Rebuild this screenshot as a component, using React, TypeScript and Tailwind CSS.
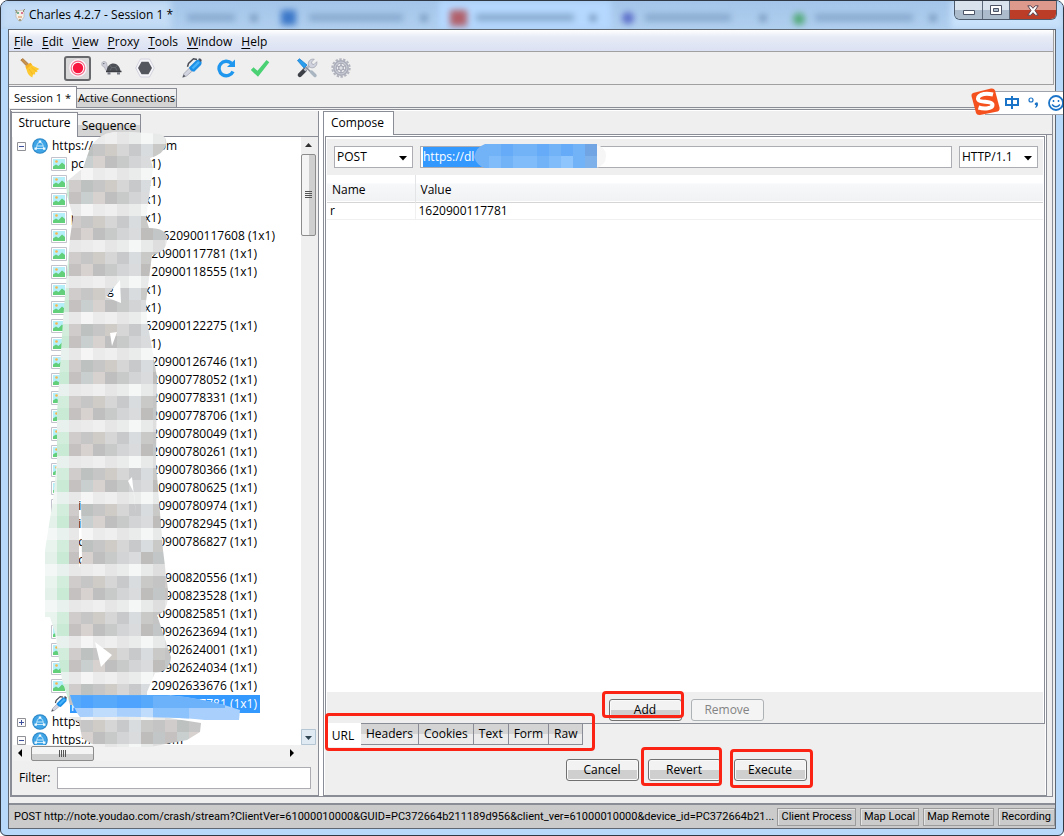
import { type ReactNode } from "react";
import { clsx } from "clsx";

type TreeRow = {
  head?: string;
  tail?: string;
  width?: "short" | "wide";
  selected?: boolean;
};

const requests: TreeRow[] = [
  { head: "pc", tail: "(1x1)", width: "short" },
  { tail: "(1x1)", width: "short" },
  { tail: "(1x1)", width: "short" },
  { head: "p", tail: "(1x1)", width: "short" },
  { tail: "620900117608 (1x1)", width: "wide" },
  { tail: "20900117781 (1x1)" },
  { tail: "20900118555 (1x1)" },
  { head: "pc.gui.g", tail: "(1x1)", width: "short" },
  { tail: "(1x1)", width: "short" },
  { tail: "620900122275 (1x1)" },
  { tail: "(1x1)", width: "short" },
  { tail: "20900126746 (1x1)" },
  { tail: "20900778052 (1x1)" },
  { tail: "20900778331 (1x1)" },
  { tail: "20900778706 (1x1)" },
  { tail: "20900780049 (1x1)" },
  { tail: "20900780261 (1x1)" },
  { tail: "20900780366 (1x1)" },
  { tail: "20900780625 (1x1)" },
  { head: "pi", tail: "20900780974 (1x1)" },
  { head: "pi", tail: "20900782945 (1x1)" },
  { head: "pc", tail: "20900786827 (1x1)" },
  { head: "pc" },
  { tail: "20900820556 (1x1)" },
  { tail: "20900823528 (1x1)" },
  { tail: "20900825851 (1x1)" },
  { tail: "20902623694 (1x1)" },
  { head: "pc.g", tail: "20902624001 (1x1)" },
  { head: "pc.g", tail: "20902624034 (1x1)" },
  { head: "pc.gu", tail: "20902633676 (1x1)" },
  { head: "p", tail: "117781 (1x1)", selected: true },
];

const menus = ["File", "Edit", "View", "Proxy", "Tools", "Window", "Help"];
const bodyTabs = ["Headers", "Cookies", "Text", "Form", "Raw"];
const statusButtons = ["Client Process", "Map Local", "Map Remote", "Recording"];

/* ---------- icons ---------- */

function BroomIcon() {
  return (
    <svg width="20" height="20" viewBox="0 0 20 20" aria-hidden>
      <path d="M.8 2 2.800.6 9.500 7 7.500 9Z" fill="#c8924a" stroke="#a8743a" strokeWidth=".8" />
      <path d="M5.500 8.500 10.500 4.800 12.800 7.800 19.500 11 17 12.300 17.500 14 15 14.200 15.200 16.500 13 16.300 12.300 19.500Q8 17.500 6.800 12.500Z" fill="#fdc92e" />
      <path d="M5.500 8.500 10.500 4.800 11.800 6.600 6.600 11Z" fill="#f7b324" />
      <path d="m9 11 4 5.500M11.500 9.500l4.500 3.500" stroke="#eeb020" strokeWidth=".7" />
    </svg>
  );
}

function RecordIcon() {
  return (
    <svg width="20" height="20" viewBox="0 0 20 20" aria-hidden>
      <circle cx="10" cy="10" r="9.300" fill="#fbf6f8" stroke="#d5ccd4" strokeWidth=".8" />
      <circle cx="10" cy="10" r="6.800" fill="#fff" stroke="#f7708e" strokeWidth="1.200" />
      <circle cx="10" cy="10" r="5.200" fill="#f8183f" />
    </svg>
  );
}

function TurtleIcon() {
  return (
    <svg width="21" height="20" viewBox="0 0 21 20" aria-hidden>
      <path d="M.8 6C.8 3.800 2.200 3.500 3.200 3.500 5.200 3.500 6 5.500 6 7.500L8 12 6.500 13.500C4.500 12.500 4 11 3.500 9 2 8.700.8 8 .8 6Z" fill="#cdced9" stroke="#a5a7b3" strokeWidth=".7" />
      <circle cx="2.800" cy="5.600" r=".7" fill="#55575e" />
      <path d="M5.500 13C6 8 9 5.500 12.500 5.500s6.500 3.500 7 7.500Z" fill="#4d4f56" />
      <path d="M9 7 10.500 9.500h4L16.500 7M10.500 9.500 9 13M14.500 9.500 16 13" stroke="#6f727a" strokeWidth=".7" fill="none" />
      <path d="M5 12.800h15.500v1.500H5Z" fill="#3b3d43" />
      <path d="M6.500 14.300h3v2.200h-3zM16 14.300h3v2.200h-3z" fill="#777a84" />
    </svg>
  );
}

function HexIcon() {
  return (
    <svg width="20" height="20" viewBox="0 0 20 20" aria-hidden>
      <path d="M5.500 1h9L19.300 10l-4.800 9h-9L.7 10Z" fill="#f6f6fa" stroke="#d2d3de" />
      <path d="M6.500 3.800h7L17 10l-3.500 6.200h-7L3 10Z" fill="#55575e" />
    </svg>
  );
}

function PenIcon({ size = 20 }: { size?: number }) {
  return (
    <svg width={size} height={size} viewBox="0 0 20 20" aria-hidden>
      <path d="M.8 19.200 2 15.500 8.500 9 11.500 12 4.500 18Z" fill="#d2d4df" stroke="#9699a6" strokeWidth=".7" />
      <path d="m.5 19.500 1.200-3 1.800 1.800Z" fill="#4f525a" />
      <path d="M7 9.500 14 2.500Q16.500.8 18.500 2.500t.5 4.500L12.200 13.800Q10 13.500 8.600 12.200T7 9.500Z" fill="#1c8fe6" />
      <path d="m10.500 10.500 6.500-6.500" stroke="#48b3fa" strokeWidth="2.400" />
      <path d="M5.500 8.800 6.500 5.500 11.500.8 15 1.500" stroke="#4b4e57" strokeWidth="1.500" fill="none" />
      <path d="m16 1 2-.8 1.800 1.800-.8 2Z" fill="#4b4f5b" />
    </svg>
  );
}

function RepeatIcon() {
  return (
    <svg width="20" height="20" viewBox="0 0 20 20" aria-hidden>
      <path d="M15.500 5.300A7.300 7.300 0 1 0 17 13.500" fill="none" stroke="#1f97ee" strokeWidth="3.400" />
      <path d="M19 1.500V9h-8Z" fill="#1f97ee" />
    </svg>
  );
}

function CheckIcon() {
  return (
    <svg width="20" height="20" viewBox="0 0 20 20" aria-hidden>
      <path d="m.8 12 2.700-2.800 4 3.600L16.500 2 19.300 4.200 8 18.800Z" fill="#4ad174" />
    </svg>
  );
}

function ToolsIcon() {
  return (
    <svg width="22" height="20" viewBox="0 0 22 20" aria-hidden>
      <path d="m3.800 17 5-5" stroke="#3d4047" strokeWidth="4.200" strokeLinecap="round" />
      <path d="m8.500 12.500 6-6" stroke="#b9bdca" strokeWidth="2.600" />
      <path d="M13 8.500C10.800 4 14 .5 18.300 1.200L15.500 4 16 6l2 .5 2.800-2.800C21.500 8 18 10.800 14.500 9.500Z" fill="#d0d3de" stroke="#9da1ae" strokeWidth=".7" />
      <path d="m9 8.500 7.500 7" stroke="#8d919d" strokeWidth="1.600" />
      <path d="m15.500 14 3.500 3.500" stroke="#aab5c2" strokeWidth="3.400" strokeLinecap="round" />
      <path d="M1.500 2.500 3.500.8 11 7 8 10Z" fill="#2a9ded" stroke="#1a7fd0" strokeWidth=".8" />
    </svg>
  );
}

function GearIcon() {
  return (
    <svg width="20" height="20" viewBox="0 0 20 20" aria-hidden>
      <circle cx="10" cy="10" r="8.700" fill="none" stroke="#b1b3be" strokeWidth="2" strokeDasharray="2.400 1.500" />
      <circle cx="10" cy="10" r="7.200" fill="#c7c9d3" stroke="#a9acb8" strokeWidth="1.400" />
      <circle cx="10" cy="10" r="4.800" fill="#ececf0" stroke="#a3a6b2" />
      <path d="M10 5v10M5.500 7.500l9 5M14.500 7.500l-9 5" stroke="#a9acb8" strokeWidth="1.400" />
      <circle cx="10" cy="10" r="2.300" fill="#dfe0e6" stroke="#9b9eaa" />
    </svg>
  );
}

function GlobeIcon() {
  return (
    <svg width="16" height="16" viewBox="0 0 16 16" aria-hidden className="shrink-0">
      <circle cx="8" cy="8" r="7.800" fill="#2b86c6" />
      <circle cx="8" cy="8" r="6.800" fill="#3fa5e6" />
      <path d="M3 10.500h10M8 3.500C5.500 5 4.500 7.500 4.500 10.500M8 3.500c2.500 1.500 3.500 4 3.500 7M5 8h6" stroke="#c4e7fc" fill="none" />
      <path d="M6.800 2.500h2.400v2.200H6.800zM2.500 9.500h2.400v2.200H2.500zM11 9.500h2.400v2.200H11z" fill="#f0faff" />
    </svg>
  );
}

function PictureIcon() {
  return (
    <svg width="16" height="14" viewBox="0 0 16 14" aria-hidden className="shrink-0">
      <path d="M.5.5h15v13H.5z" fill="#fff" stroke="#c3c3cd" />
      <path d="M2 2h12v10H2z" fill="#b4effa" />
      <path d="M2 9.500 5 7.500 7.500 9 11 5.500l3 2.500v4H2z" fill="#62cf7b" />
      <circle cx="5.500" cy="4.500" r="1.300" fill="#f7b64a" />
    </svg>
  );
}

function Expander({ open }: { open?: boolean }) {
  return (
    <button type="button" aria-label={open ? "Collapse" : "Expand"} className="shrink-0">
      <svg width="9" height="9" viewBox="0 0 9 9" aria-hidden>
        <path d="M.5.5h8v8h-8z" fill="#fbfbfb" stroke="#8f9197" />
        <path d={open ? "M2 4.500h5" : "M2 4.500h5M4.500 2v5"} stroke="#3c4e9c" />
      </svg>
    </button>
  );
}

/* ---------- pixelated cover ---------- */

const mosaicTones = [
  ["#f3f7f5", "#e9f1ee", "#e8e8e8", "#f5f5f6", "#ebebec", "#f0efef", "#e6e6e6", "#eaebeb", "#f5f6f6", "#e8e9e9", "#dededf"],
  ["#eaf4ef", "#d2eddc", "#cfcccb", "#bdc1bf", "#c6c6c6", "#cfcbc7", "#d6d6d6", "#c7c9cb", "#d9dcde", "#c9c9c8", "#c4c4c4"],
  ["#e4f1ea", "#c9ebd6", "#c6c1c1", "#c9cecf", "#d7d2cf", "#bfbfbf", "#c8c9c9", "#d2d4d6", "#d9dbdc", "#bebdbb", "#c3c6c7"],
];

const columnShape =
  "M113 132H133L160 134Q168 137 166 145Q164 154 150 158L153 168L146 218L149 228Q167 228 167 239Q167 252 152 255L146 302L147 320L157 377L156 463L163 550L168 590Q169 612 157 615L163 633L171 657Q170 672 155 673L147 692V705H70L62 680L55 633L50 617H45V550L53 500L57 460V413L63 320L67 272L70 238L73 217L67 195L66 182L83 168L90 148Q98 134 113 132Z" +
  "M106 297 120 280 121 303ZM110 333 117 332 112 346ZM128 481 132 477 136 515 134 493ZM79 500 81 500 82 560 79 568ZM95 642 112 655 101 667Z" +
  "M68 717H163L201 723 200 732 187 740 150 747H97L82 738 79 722Z";

function TreeMosaic() {
  const cells: ReactNode[] = [];
  for (let row = 0; row < 52; row++) {
    for (let col = 0; col < 14; col++) {
      // the middle columns drift one step every few rows so that they don't stripe
      const drift = col > 2 && Math.floor(row / 7) % 2 ? 1 : 0;
      const tone = mosaicTones[row % 3][col < 2 ? col : 2 + ((col - 2 + drift) % 9)];
      cells.push(
        <rect key={`${row}-${col}`} x={45 + col * 12} y={132 + row * 12} width="12" height="12" fill={tone} />
      );
    }
  }
  return (
    <svg
      width="260"
      height="640"
      viewBox="12 111 260 640"
      shapeRendering="crispEdges"
      aria-hidden
      className="pointer-events-none absolute left-0 top-0"
    >
      <clipPath id="column">
        <path d={columnShape} clipRule="evenodd" />
      </clipPath>
      <clipPath id="stroke">
        <path d="M70 695H167Q205 698 240 710L239 720H205Q170 716 80 717Q74 710 70 695Z" />
      </clipPath>
      <g clipPath="url(#column)">{cells}</g>
      <g clipPath="url(#stroke)">
        <path d="M60 690H250V722H60z" fill="#a9d0fc" />
        <path d="M60 690H170V708H60z" fill="#57a9fb" />
        <path d="M81 696h12v12H81zM117 696h24v12h-24z" fill="#4da3fd" />
        <path d="M153 696h72v12h-72z" fill="#6cb2fb" />
        <path d="M93 708h24v12H93zM141 708h12v12h-12z" fill="#bfdcfd" />
        <path d="M153 708h36v12h-36z" fill="#8cc3fd" />
      </g>
    </svg>
  );
}

/* ---------- small parts ---------- */

function Highlight({ className }: { className: string }) {
  return (
    <span
      aria-hidden
      className={clsx("pointer-events-none absolute rounded-sm border-3 border-[#fb2313]", className)}
    />
  );
}

function PushButton({ children, disabled }: { children: ReactNode; disabled?: boolean }) {
  return (
    <button
      type="button"
      disabled={disabled}
      className={clsx(
        "h-[22px] w-[73px] rounded-[3px] border text-[12px] leading-5",
        disabled
          ? "border-[#adb2b5] bg-[#f4f4f4] text-[#838383]"
          : "border-[#707070] bg-linear-to-b from-[#f2f2f2] from-50% to-[#cfcfcf] to-50% text-black shadow-[inset_0_0_0_1px_#fafafa]"
      )}
    >
      {children}
    </button>
  );
}

function Combo({ label, value }: { label: string; value: string }) {
  return (
    <div className="relative w-[79px] shrink-0">
      <select
        aria-label={label}
        defaultValue={value}
        className="h-[22px] w-full appearance-none border border-[#abadb3] bg-white px-[2px] text-[12px] leading-5"
      >
        <option>{value}</option>
      </select>
      <svg width="8" height="5" viewBox="0 0 8 5" className="pointer-events-none absolute right-[6px] top-[10px]" aria-hidden>
        <path d="M0 0h8L4 4.500Z" />
      </svg>
    </div>
  );
}

function TitleBar() {
  return (
    <header className="relative flex h-[28px] shrink-0 items-center overflow-hidden bg-linear-to-b from-[#a4c5e9] to-[#b0cfef] pl-[14px]">
      <svg className="absolute inset-0 h-full w-full blur-[3px]" aria-hidden>
        <path d="M438 0H610V30H438z" fill="#b5d8ff" />
        <path d="M0 0h170v30H0z" fill="#c4dcf5" />
        <path d="M950 0h120v30H950z" fill="#c9e2fb" />
        <path d="M186 13h48v7h-48zM308 13h94v7h-94zM475 13h98v7h-98zM644 13h86v7h-86zM814 13h98v7h-98z" fill="#86a8cc" />
        <path d="M250 14h6v6h-6zM420 14h6v6h-6zM589 14h6v6h-6zM759 14h6v6h-6zM929 14h6v6h-6z" fill="#6687ad" />
        <path d="M280 9h15v15h-15z" fill="#3c78c8" />
        <path d="M449 9h17v16h-17z" fill="#b1606a" />
        <circle cx="627" cy="17" r="6" fill="#5a6cc8" />
        <circle cx="798" cy="18" r="6" fill="#4fa874" />
      </svg>
      <svg width="10" height="14" viewBox="0 0 10 14" className="relative shrink-0" aria-hidden>
        <path d="m1 3 8-1v7l-3 4H4L1 9Z" fill="#f3eee8" stroke="#b8b4a8" strokeWidth=".6" />
        <path d="M0 2 2 3 1 5M10 1 8 3l1 1M4 13l1-2 1 2" stroke="#8c8d6e" fill="none" />
        <circle cx="3" cy="5" r="1" fill="#4e9c78" />
        <circle cx="7" cy="5" r="1" fill="#d24b72" />
        <path d="M3 9h4" stroke="#d7894b" />
      </svg>
      <h1 className="relative ml-1 text-[12px] leading-4">Charles 4.2.7 - Session 1 *</h1>
      <div className="absolute right-[6px] top-0 flex h-[19px] overflow-hidden rounded-b-md border border-t-0 border-[#4c5a6c]">
        <button type="button" aria-label="Minimize" className="flex w-7 items-center justify-center border-r border-[#5c6a7c] bg-linear-to-b from-[#d9e3ee] from-50% to-[#adbccd] to-50%">
          <svg width="12" height="6" viewBox="0 0 12 6" className="mt-[5px]" aria-hidden>
            <path d="M.5.5h11v4H.5z" fill="#fff" stroke="#4b5364" />
          </svg>
        </button>
        <button type="button" aria-label="Maximize" className="flex w-[27px] items-center justify-center border-r border-[#5c6a7c] bg-linear-to-b from-[#d9e3ee] from-50% to-[#adbccd] to-50%">
          <svg width="12" height="10" viewBox="0 0 12 10" aria-hidden>
            <path d="M.5.5h11v9H.5z" fill="#fff" stroke="#4b5364" />
            <path d="M3.500 3.500h5v3h-5z" fill="#aebdce" stroke="#4b5364" />
          </svg>
        </button>
        <button type="button" aria-label="Close" className="flex w-[46px] items-center justify-center bg-linear-to-b from-[#dd9a8c] from-50% to-[#bb3d28] to-50%">
          <svg width="12" height="11" viewBox="0 0 12 11" aria-hidden>
            <path d="M.8.8h3L6 3.300 8.200.8h3L8 5.500l3.200 4.700h-3L6 7.700l-2.200 2.500h-3L4 5.500Z" fill="#fff" stroke="#5a4450" />
          </svg>
        </button>
      </div>
    </header>
  );
}

function InputMethodBar() {
  return (
    <div className="absolute right-0 top-[87px] flex h-7 w-[92px] items-center">
      <div className="absolute left-[14px] right-0 top-[3px] h-[24px] border-y border-[#9fa3ac] bg-white" />
      <svg width="93" height="28" viewBox="0 0 93 28" className="relative shrink-0" role="img" aria-label="Input method">
        <path d="M2 5 20 .5q3-.5 4 2l4.500 17q.5 3-2 4L9 27q-3 .5-4-2L.5 8Q0 6 2 5Z" fill="#f4511e" />
        <path d="M22 6.500C12 4 5 8 7.500 12c2 3 14 .5 14 5 0 3.500-8 4.500-14 2.500" fill="none" stroke="#fff" strokeWidth="4" />
        <path d="M35 11h12v6H35zM41 8v13" fill="none" stroke="#1b74c8" strokeWidth="2" />
        <circle cx="60" cy="12" r="2" fill="none" stroke="#1b74c8" strokeWidth="1.200" />
        <path d="M64 15q3-2 3 1 0 3-3 4 1-2 1-3-2 0-1-2Z" fill="#1b74c8" />
        <circle cx="85" cy="15" r="7" fill="none" stroke="#1b74c8" strokeWidth="1.800" />
        <path d="M82.500 12v2M87.500 12v2M81 16.500q4 4.500 8 0" fill="none" stroke="#1b74c8" strokeWidth="1.500" />
      </svg>
    </div>
  );
}

function Toolbar() {
  return (
    <div className="mr-px flex h-[33px] shrink-0 items-center border-b border-r border-[#a0a0a0] bg-[#efefef] pl-[11px]">
      <button type="button" aria-label="Clear"><BroomIcon /></button>
      <button
        type="button"
        aria-label="Record"
        aria-pressed
        className="ml-6 flex h-[25px] w-[27px] items-center justify-center rounded-[3px] border-2 border-[#68696c] bg-[#d9d9d9]"
      >
        <RecordIcon />
      </button>
      <button type="button" aria-label="Throttle" className="ml-[10px]"><TurtleIcon /></button>
      <button type="button" aria-label="Breakpoints" className="ml-[13px]"><HexIcon /></button>
      <button type="button" aria-label="Compose" className="ml-[27px]"><PenIcon /></button>
      <button type="button" aria-label="Repeat" className="ml-[14px]"><RepeatIcon /></button>
      <button type="button" aria-label="Validate" className="ml-[14px]"><CheckIcon /></button>
      <button type="button" aria-label="Tools" className="ml-[26px]"><ToolsIcon /></button>
      <button type="button" aria-label="Settings" className="ml-[13px]"><GearIcon /></button>
    </div>
  );
}

function HostRow({ open, children }: { open?: boolean; children: ReactNode }) {
  return (
    <li className="flex h-[18px] items-center pl-1">
      <Expander open={open} />
      <span className="ml-[6px] mr-1 flex">
        <GlobeIcon />
      </span>
      {children}
    </li>
  );
}

function StructureTree() {
  return (
    <ul className="min-w-0 flex-1 overflow-hidden bg-white text-[12px] leading-[18px]">
      <HostRow open>
        <span className="flex w-[125px] justify-between">
          <span>https://</span>
          <span>om</span>
        </span>
      </HostRow>
      {requests.map((row, i) => (
        <li key={i} className="flex h-[18px] items-center pl-[38px]">
          {row.selected ? <PenIcon size={16} /> : <PictureIcon />}
          <span
            className={clsx(
              "ml-[3px] flex shrink-0 justify-between whitespace-nowrap px-px",
              row.width === "short" && "w-[92px]",
              row.width === "wide" && "w-[206px]",
              !row.width && "w-[190px] pr-[3px]",
              row.selected && "bg-[#3399ff] text-white"
            )}
          >
            <span>{row.head}</span>
            <span>{row.tail}</span>
          </span>
        </li>
      ))}
      <HostRow>
        <span>https</span>
      </HostRow>
      <HostRow open>
        <span className="flex w-[131px] justify-between">
          <span>https://</span>
          <span>om</span>
        </span>
      </HostRow>
    </ul>
  );
}

function LeftPane() {
  return (
    <section className="relative flex w-[308px] shrink-0 flex-col border-x border-b border-[#8a8d96] bg-[#efefef]">
      <div className="flex h-[26px] shrink-0 items-end border-b border-[#8a8d96]" role="tablist">
        <button type="button" role="tab" aria-selected className="-mb-px h-[25px] w-[66px] border-r border-t border-[#8a8d96] bg-white pb-1 text-[12px] leading-5">
          Structure
        </button>
        <button type="button" role="tab" aria-selected={false} className="h-[22px] w-[63px] border-r border-t border-[#8a8d96] bg-linear-to-b from-[#f0f0f0] from-50% to-[#d4d4d4] to-50% text-[12px] leading-5">
          Sequence
        </button>
      </div>
      <div className="flex min-h-0 flex-1 pl-px pr-[2px]">
        <StructureTree />
        <div className="flex w-[15px] flex-col bg-[#efefef]" aria-hidden>
          <svg width="15" height="17" viewBox="0 0 15 17" className="shrink-0">
            <path d="M4 10h7L7.500 6Z" fill="#303030" />
          </svg>
          <div className="flex h-[82px] shrink-0 items-center justify-center rounded-xs border border-[#8c8c8c] bg-linear-to-r from-[#f4f4f4] from-50% to-[#cfcfcf] to-50%">
            <svg width="7" height="8" viewBox="0 0 7 8">
              <path d="M0 .5h7M0 2.500h7M0 4.500h7M0 6.500h7" stroke="#555" />
            </svg>
          </div>
          <div className="flex-1" />
          <svg width="15" height="16" viewBox="0 0 15 16" className="shrink-0">
            <path d="M.5.5h14v15H.5z" fill="#dfeaf3" stroke="#b4c5d3" />
            <path d="M4 7h7l-3.500 4Z" fill="#2f4552" />
          </svg>
        </div>
      </div>
      <div className="mr-[18px] flex h-4 shrink-0 items-center bg-[#f1f1f1] pl-1" aria-hidden>
        <svg width="10" height="8" viewBox="0 0 10 8">
          <path d="M6 0v8L2 4Z" />
        </svg>
        <div className="ml-[5px] flex h-[15px] w-[63px] items-center justify-center rounded-xs border border-[#8c8c8c] bg-linear-to-b from-[#f4f4f4] from-50% to-[#cfcfcf] to-50%">
          <svg width="8" height="7" viewBox="0 0 8 7">
            <path d="M.5 0v7M2.500 0v7M4.500 0v7M6.500 0v7" stroke="#555" />
          </svg>
        </div>
        <svg width="10" height="8" viewBox="0 0 10 8" className="ml-auto mr-1">
          <path d="M4 0v8l4-4Z" />
        </svg>
      </div>
      <div className="flex h-[34px] shrink-0 items-center px-[7px]">
        <label htmlFor="filter" className="w-[38px] text-[12px] leading-5">Filter:</label>
        <input id="filter" type="text" className="h-[22px] min-w-0 flex-1 border border-[#abadb3] bg-white px-1 text-[12px]" />
      </div>
      <TreeMosaic />
    </section>
  );
}

function UrlField() {
  return (
    <div className="relative flex h-[22px] min-w-0 flex-1 items-center border border-[#abadb3] bg-white px-[2px]">
      <input
        type="text"
        aria-label="URL"
        defaultValue="https://dl"
        className="h-5 w-[174px] bg-[#3399ff] text-[12px] leading-5 text-white outline-none"
      />
      <svg width="136" height="26" viewBox="0 0 136 26" className="absolute -top-[4px] left-[52px]" aria-hidden>
        <clipPath id="url-cover">
          <path d="M12 1H124V25H12Q4 23 1 14 3 4 12 1Z" />
        </clipPath>
        <path d="M122 2Q133 3 133 13T122 25Z" fill="#f6f6f7" />
        <g clipPath="url(#url-cover)" shapeRendering="crispEdges">
          <path d="M0 0h136v26H0z" fill="#72b3f8" />
          <path d="M28 1h12v12H28zM64 1h12v12H64zM88 1h12v12H88z" fill="#66abf7" />
          <path d="M16 13h12v12H16zM40 13h24v12H40zM76 13h12v12H76z" fill="#80bcfa" />
          <path d="M88 13h12v12H88z" fill="#8fc5fd" />
          <path d="M112 0h12v13h-12z" fill="#71a4e2" />
          <path d="M112 13h12v13h-12z" fill="#7eb1ea" />
        </g>
      </svg>
    </div>
  );
}

function ComposePane() {
  return (
    <section className="flex min-w-0 flex-1 flex-col border-l border-[#8a8d96] bg-[#efefef]">
      <div className="flex h-[24px] shrink-0 items-start" role="tablist">
        <button type="button" role="tab" aria-selected className="h-6 w-[70px] border-r border-t border-[#8a8d96] bg-white pb-[2px] pr-[2px] text-[12px] leading-5">
          Compose
        </button>
        <span className="h-full flex-1 border-b border-[#8a8d96]" />
      </div>
      <div className="mr-[5px] flex min-h-0 flex-1 flex-col border-b border-r border-[#8a8d96] bg-white pl-px pt-px">
        <div className="mr-px flex min-h-0 flex-1 flex-col border border-[#8a8d96] bg-white px-px pt-[2px]">
          <div className="flex shrink-0 gap-[7px] bg-[#efefef] py-[7px] pl-[7px] pr-[5px]">
            <Combo label="Method" value="POST" />
            <UrlField />
            <Combo label="Protocol" value="HTTP/1.1" />
          </div>
          <table className="w-full table-fixed border-collapse text-left text-[12px]">
            <thead>
              <tr className="h-[27px] border-b border-[#d5d5d5] bg-linear-to-b from-white from-30% via-[#f7f8fa] via-35% to-[#f1f2f4]">
                <th scope="col" className="w-[88px] border-r border-[#e3e4e6] pl-[5px] pt-1 font-normal leading-4">Name</th>
                <th scope="col" className="pl-[5px] pt-1 font-normal leading-4">Value</th>
              </tr>
            </thead>
            <tbody>
              <tr className="h-[17px] border-b border-[#f0f0f0]">
                <td className="border-r border-[#f0f0f0] pl-[3px] leading-4">r</td>
                <td className="pl-[3px] leading-4">1620900117781</td>
              </tr>
            </tbody>
          </table>
          <div className="flex-1" />
          <div className="flex h-[31px] shrink-0 items-end justify-center gap-[9px] bg-[#efefef] pb-[2px] pl-[2px]">
            <div className="relative h-[22px]">
              <PushButton>Add</PushButton>
              <Highlight className="-left-[7px] -right-[2px] -top-2 bottom-[3px]" />
            </div>
            <PushButton disabled>Remove</PushButton>
          </div>
        </div>
        <div className="relative mr-px flex h-6 shrink-0 items-start bg-[#efefef]" role="tablist">
          <button type="button" role="tab" aria-selected className="-mt-px h-6 w-9 bg-white pt-[2px] text-[12px] leading-5">URL</button>
          {bodyTabs.map((tab) => (
            <button
              key={tab}
              type="button"
              role="tab"
              aria-selected={false}
              className="-mt-px h-[22px] border border-l-0 border-[#8a8d96] bg-linear-to-b from-[#d4d4d4] from-50% to-[#ececec] to-50% px-[5px] text-[12px] leading-5"
            >
              {tab}
            </button>
          ))}
          <Highlight className="-top-[11px] left-0 h-[38px] w-[270px]" />
        </div>
        <div className="mr-px flex flex-none items-start justify-center gap-[9px] bg-[#efefef] pb-[14px] pl-[2px] pt-[11px]">
          <PushButton>Cancel</PushButton>
          <div className="relative h-[22px]">
            <PushButton>Revert</PushButton>
            <Highlight className="-bottom-[5px] -left-[7px] -right-px -top-3" />
          </div>
          <div className="relative ml-1 h-[22px]">
            <PushButton>Execute</PushButton>
            <Highlight className="-bottom-[7px] -left-[4px] -right-[6px] -top-[10px]" />
          </div>
        </div>
      </div>
    </section>
  );
}

export default function App() {
  return (
    <div className="relative flex h-screen flex-col overflow-hidden rounded-t-lg rounded-b-md border border-[#303844] bg-[#b9d9fb] font-['Open_Sans','Noto_Sans',sans-serif] text-[12px] text-black">
      <TitleBar />
      <div className="mx-[7px] mb-[6px] flex min-h-0 flex-1 flex-col border border-[#5f6773] bg-[#efefef]">
        <nav className="mr-px flex h-[22px] shrink-0 items-center gap-[9px] border-b border-r border-[#a0a0a0] bg-linear-to-b from-white from-0% via-[#e6ebf5] via-35% to-[#dbe1f3] pl-[5px] pt-[2px]">
          {menus.map((menu) => (
            <button key={menu} type="button" className="text-[12px] leading-5">
              <span className="underline underline-offset-2">{menu[0]}</span>
              {menu.slice(1)}
            </button>
          ))}
        </nav>
        <Toolbar />
        <div className="mt-px flex h-[22px] shrink-0 items-end border-b border-[#8a8d96]" role="tablist">
          <button type="button" role="tab" aria-selected className="-mb-px h-[22px] w-[68px] border-r border-t border-[#8a8d96] bg-white text-[11px] leading-5">
            Session 1 *
          </button>
          <button type="button" role="tab" aria-selected={false} className="h-[19px] w-[100px] border-r border-t border-[#8a8d96] bg-linear-to-b from-[#f0f0f0] from-50% to-[#d4d4d4] to-50% text-[11px] leading-[18px]">
            Active Connections
          </button>
        </div>
        <main className="mb-[6px] ml-px mr-[2px] mt-px flex min-h-0 flex-1 border border-[#8a8d96] bg-white pt-px">
          <LeftPane />
          <div className="w-1 shrink-0 bg-white" />
          <ComposePane />
        </main>
        <footer className="flex h-[25px] shrink-0 items-center gap-1 border-t-2 border-[#8a8d96] bg-[#cbcbcb] pl-[5px] font-[Roboto,sans-serif] text-[11px] leading-4">
          <p className="min-w-0 flex-1 whitespace-nowrap">
            POST http://note.youdao.com/crash/stream?ClientVer=61000010000&GUID=PC372664b211189d956&client_ver=61000010000&device_id=PC372664b21...
          </p>
          {statusButtons.map((name) => (
            <button
              key={name}
              type="button"
              className="h-[18px] shrink-0 border border-[#9b9b9b] px-[3px] leading-4 shadow-[inset_1px_1px_0_#e4e4e4]"
            >
              {name}
            </button>
          ))}
        </footer>
      </div>
      <InputMethodBar />
    </div>
  );
}
